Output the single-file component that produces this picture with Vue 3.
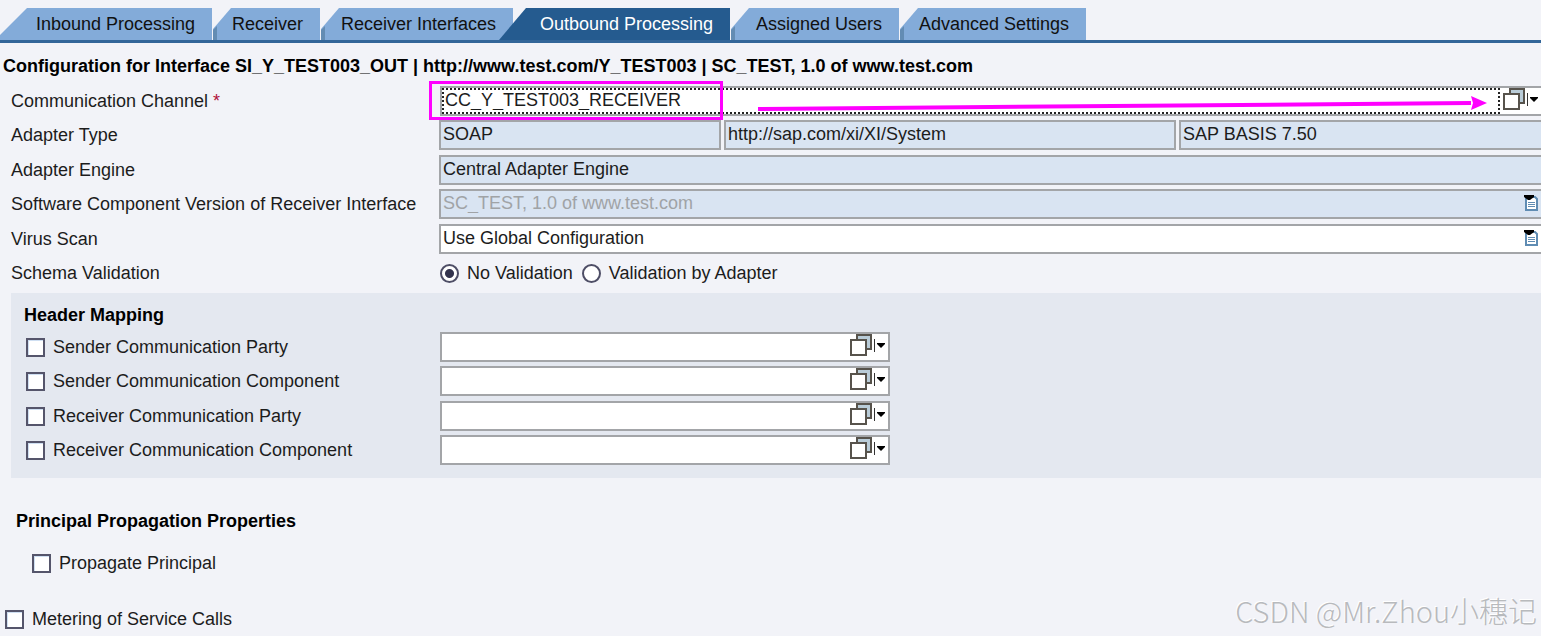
<script setup>
import { ref } from 'vue';

const tabs = [
    'Inbound Processing',
    'Receiver',
    'Receiver Interfaces',
    'Outbound Processing',
    'Assigned Users',
    'Advanced Settings',
];
const activeTab = ref('Outbound Processing');

const channel = ref('CC_Y_TEST003_RECEIVER');
const virusScan = ref('Use Global Configuration');
const validation = ref('none');

const headerMapping = ref([
    { id: 'sender-party', label: 'Sender Communication Party', checked: false, value: '' },
    { id: 'sender-component', label: 'Sender Communication Component', checked: false, value: '' },
    { id: 'receiver-party', label: 'Receiver Communication Party', checked: false, value: '' },
    { id: 'receiver-component', label: 'Receiver Communication Component', checked: false, value: '' },
]);

const propagate = ref(false);
const metering = ref(false);
</script>

<template>
    <div class="page">
        <nav class="tabs">
            <button
                v-for="tab in tabs"
                :key="tab"
                type="button"
                class="tab"
                :class="{ active: tab === activeTab }"
                @click="activeTab = tab"
            ><span>{{ tab }}</span></button>
        </nav>

        <h1>Configuration for Interface SI_Y_TEST003_OUT | http://www.test.com/Y_TEST003 | SC_TEST, 1.0 of www.test.com</h1>

        <div class="form">
            <label for="channel">Communication Channel <span class="required">*</span></label>
            <div class="combo channel">
                <input id="channel" v-model="channel" type="text" />
                <button type="button" class="picker" aria-label="Select channel">
                    <svg width="38" height="24" viewBox="0 0 38 24">
                        <path d="M7 1h14v14H7z" fill="#b9ccd8" stroke="#57534c" stroke-width="2" />
                        <path d="M1 6h15v15H1z" fill="#fff" stroke="#57534c" stroke-width="2" />
                        <path d="M24.5 5v13" stroke="#333" />
                        <path d="M27 9h8v1l-4 4-4-4z" fill="#000" />
                    </svg>
                </button>
                <span class="mark"></span>
                <div class="arrow">
                    <svg class="arrow-line" viewBox="0 0 714 16" preserveAspectRatio="none">
                        <path d="M0 14L714 8" stroke="#f0f" stroke-width="4" />
                    </svg>
                    <svg width="16" height="16" viewBox="0 0 16 16">
                        <path d="M0 1l16 7-16 7 2-7z" fill="#f0f" />
                    </svg>
                </div>
            </div>

            <label for="adapter">Adapter Type</label>
            <div class="adapter">
                <input id="adapter" class="field" type="text" value="SOAP" readonly />
                <input class="field" type="text" value="http://sap.com/xi/XI/System" aria-label="Adapter namespace" readonly />
                <input class="field" type="text" value="SAP BASIS 7.50" aria-label="Adapter version" readonly />
            </div>

            <label for="engine">Adapter Engine</label>
            <input id="engine" class="field" type="text" value="Central Adapter Engine" readonly />

            <label for="version">Software Component Version of Receiver Interface</label>
            <div class="drop">
                <select id="version" class="field" disabled>
                    <option>SC_TEST, 1.0 of www.test.com</option>
                </select>
                <svg class="list-icon" width="14" height="18" viewBox="0 0 14 18">
                    <path d="M2 3h9l2 2v11H2z" fill="#fff" stroke="#5f8cb3" stroke-width="2" />
                    <path d="M4 8.5h7M4 10.5h7M4 12.5h7" stroke="#5f8cb3" />
                    <path d="M0 1h10v2L6 6H4L0 3z" fill="#000" />
                </svg>
            </div>

            <label for="virus">Virus Scan</label>
            <div class="drop">
                <select id="virus" v-model="virusScan" class="field editable">
                    <option>Use Global Configuration</option>
                </select>
                <svg class="list-icon" width="14" height="18" viewBox="0 0 14 18">
                    <path d="M2 3h9l2 2v11H2z" fill="#fff" stroke="#5f8cb3" stroke-width="2" />
                    <path d="M4 8.5h7M4 10.5h7M4 12.5h7" stroke="#5f8cb3" />
                    <path d="M0 1h10v2L6 6H4L0 3z" fill="#000" />
                </svg>
            </div>

            <span class="caption">Schema Validation</span>
            <div class="radios">
                <input id="no-validation" v-model="validation" type="radio" value="none" />
                <label for="no-validation">No Validation</label>
                <input id="by-adapter" v-model="validation" type="radio" value="adapter" />
                <label for="by-adapter">Validation by Adapter</label>
            </div>
        </div>

        <section class="panel">
            <h2>Header Mapping</h2>
            <div class="mapping">
                <template v-for="row in headerMapping" :key="row.id">
                    <div class="check">
                        <input :id="row.id" v-model="row.checked" type="checkbox" />
                        <label :for="row.id">{{ row.label }}</label>
                    </div>
                    <div class="combo">
                        <input v-model="row.value" type="text" :aria-label="row.label" />
                        <button type="button" class="picker" aria-label="Select value">
                            <svg width="38" height="24" viewBox="0 0 38 24">
                                <path d="M7 1h14v14H7z" fill="#b9ccd8" stroke="#57534c" stroke-width="2" />
                                <path d="M1 6h15v15H1z" fill="#fff" stroke="#57534c" stroke-width="2" />
                                <path d="M24.5 5v13" stroke="#333" />
                                <path d="M27 9h8v1l-4 4-4-4z" fill="#000" />
                            </svg>
                        </button>
                    </div>
                </template>
            </div>
        </section>

        <section class="principal">
            <h2>Principal Propagation Properties</h2>
            <div class="check">
                <input id="propagate" v-model="propagate" type="checkbox" />
                <label for="propagate">Propagate Principal</label>
            </div>
        </section>

        <div class="check metering">
            <input id="metering" v-model="metering" type="checkbox" />
            <label for="metering">Metering of Service Calls</label>
        </div>

        <div class="watermark">CSDN @Mr.Zhou小穗记</div>
    </div>
</template>

<style>
body {
    margin: 0;
    background: #f2f3f8;
}
</style>

<style scoped>
.page {
    position: relative;
    box-sizing: border-box;
    min-height: 100vh;
    padding-top: 8px;
    overflow: hidden;
    font-family: "Liberation Sans", Arial, sans-serif;
    font-size: 18px;
    line-height: 20px;
    color: #1c1c1c;
}

input,
select,
button {
    box-sizing: border-box;
    margin: 0;
    font: inherit;
    color: inherit;
}

/* Tab strip */
.tabs {
    display: grid;
    grid-template-columns: 213px 108px 193px 217px 169px 187px;
    height: 32px;
    border-bottom: 3px solid #336699;
}

.tab {
    position: relative;
    padding: 0 18px 0 0;
    border: none;
    background: none;
    text-align: right;
    white-space: nowrap;
    color: #111;
}

.tab::before {
    content: "";
    position: absolute;
    inset: 0 1px 0 0;
    background: #83abd9;
    clip-path: polygon(0 21px, 18px 0, 100% 0, 100% 100%, 0 100%);
}

.tab:first-child::before {
    clip-path: polygon(0 27px, 27px 0, 100% 0, 100% 100%, 0 100%);
}

.tab:not(:first-child):not(.active)::after {
    content: "";
    position: absolute;
    left: 0;
    bottom: 0;
    width: 4px;
    height: 14px;
    background: #638cb3;
    clip-path: polygon(0 4px, 100% 0, 100% 100%, 0 100%);
}

.tab.active {
    color: #fff;
}

.tab.active::before {
    left: -15px;
    background: #255b8f;
    clip-path: polygon(0 100%, 27px 0, 100% 0, 100% 100%);
}

.tab span {
    position: relative;
}

h1,
h2 {
    margin: 0;
    font-size: 18px;
    line-height: 20px;
    font-weight: bold;
    color: #000;
}

h1 {
    padding: 13px 3px 10px;
    white-space: nowrap;
}

/* Main form */
.form {
    display: grid;
    grid-template-columns: 428px minmax(0, 1fr);
    grid-template-rows: 34px 35px 34px 35px 34px 35px;
    align-items: start;
    padding-left: 11px;
}

.form > label,
.caption {
    line-height: 30px;
}

.required {
    color: #b0103a;
}

.field {
    width: 100%;
    height: 30px;
    padding: 0 2px 2px;
    border: 2px solid #a3a5a8;
    border-right: none;
    border-radius: 0;
    outline: none;
    background: #d9e4f2;
    appearance: none;
}

.field:disabled {
    color: #a0a3a6;
    opacity: 1;
}

.editable {
    background: #fff;
}

.adapter {
    display: grid;
    grid-template-columns: 282px 452px minmax(0, 1fr);
    column-gap: 3px;
}

.adapter .field:not(:last-child) {
    border-right: 2px solid #a3a5a8;
}

.drop {
    position: relative;
}

.list-icon {
    position: absolute;
    top: 5px;
    right: 3px;
    pointer-events: none;
}

.combo {
    position: relative;
    display: flex;
    height: 30px;
    box-sizing: border-box;
    border: 2px solid #a3a5a8;
    background: #fff;
}

.combo input {
    flex: 1;
    min-width: 0;
    padding: 0 2px;
    border: none;
    outline: none;
    background: none;
}

.picker {
    display: flex;
    flex: none;
    padding: 0;
    border: none;
    background: none;
}

.channel {
    margin-left: 1px;
    border-right: none;
}

.channel input {
    padding: 0 1px 2px;
    border: 2px dotted #222;
}

.channel .picker {
    padding-left: 3px;
}

/* Highlight drawn over the channel field */
.mark {
    position: absolute;
    top: -7px;
    left: -13px;
    width: 294px;
    height: 39px;
    box-sizing: border-box;
    border: 3px solid #f0f;
    pointer-events: none;
}

.arrow {
    position: absolute;
    top: 7px;
    left: 316px;
    right: 54px;
    display: flex;
    pointer-events: none;
}

.arrow-line {
    flex: 1;
    height: 16px;
    min-width: 0;
}

.radios {
    display: flex;
    align-items: center;
    height: 30px;
}

.radios input {
    width: 19px;
    height: 19px;
    margin-left: 1px;
    border: 2px solid #4e4e66;
    border-radius: 50%;
    background: #fff;
    appearance: none;
}

.radios input:checked {
    background: radial-gradient(circle, #33334d 0 4px, #fff 5px);
}

.radios label {
    padding: 0 8px;
}

/* Header mapping */
.panel {
    margin-left: 11px;
    padding: 12px 0 9px 13px;
    background: #e4e8f0;
}

.mapping {
    display: grid;
    grid-template-columns: 416px 450px;
    grid-template-rows: 34px 35px 34px 34px;
    align-items: start;
    padding-top: 7px;
}

.check {
    display: flex;
    align-items: center;
    gap: 8px;
    height: 30px;
    padding-left: 2px;
}

.check input {
    width: 19px;
    height: 19px;
    border: 2px solid #55556b;
    background: #fff;
    box-shadow: inset 1px 1px #cfdff2;
    appearance: none;
}

.check input:checked {
    background: radial-gradient(circle, #33334d 0 4px, #fff 5px);
}

.principal {
    padding: 33px 16px 0;
}

.principal .check {
    padding: 17px 0 0 16px;
}

.metering {
    padding: 26px 0 0 5px;
}

.watermark {
    position: absolute;
    right: 4px;
    bottom: 8px;
    font-family: "Noto Sans CJK SC", sans-serif;
    font-size: 29px;
    font-weight: 300;
    line-height: 36px;
    color: #b8babd;
    text-shadow: -1px -1px #fff;
    pointer-events: none;
}
</style>
